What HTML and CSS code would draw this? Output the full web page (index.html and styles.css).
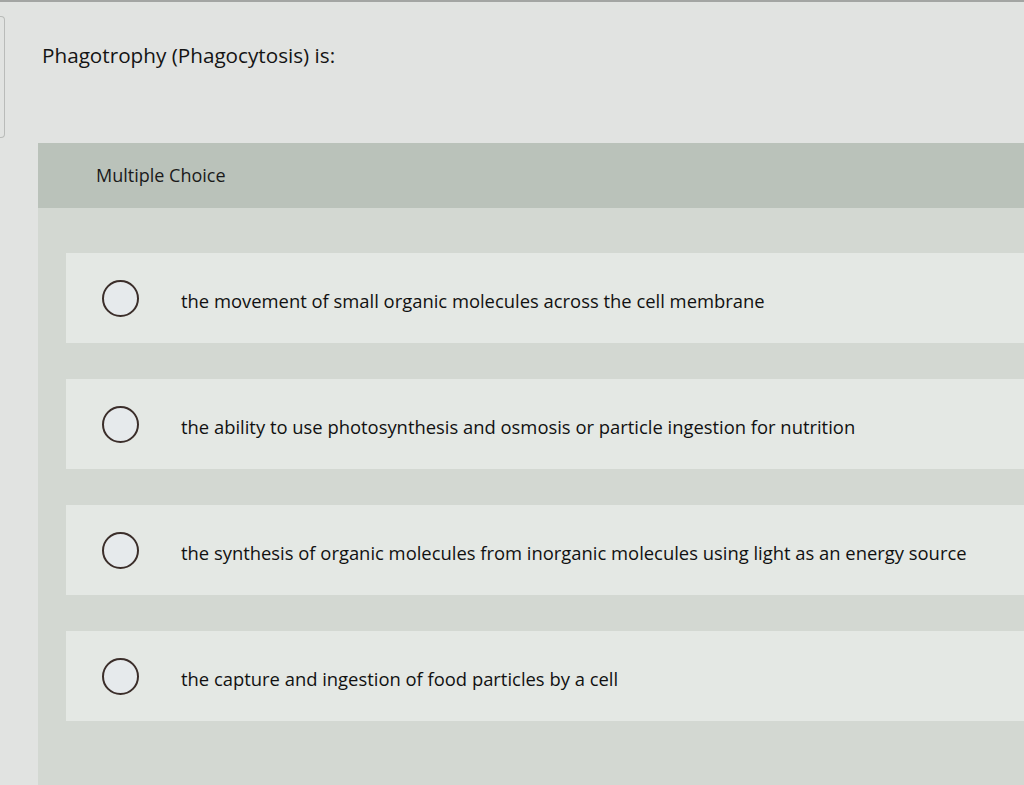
FILE: index.html
```html
<!DOCTYPE html>
<html lang="en">
<head>
<meta charset="utf-8">
<title>Phagotrophy question</title>
<link rel="stylesheet" href="styles.css">
</head>
<body>
<div class="page">
  <div class="stub"></div>
  <main class="content">
    <h1 class="question">Phagotrophy (Phagocytosis) is:</h1>
    <section class="panel">
      <div class="panel-head">Multiple Choice</div>
      <div class="options">
        <label class="option"><span class="radio"></span><span class="option-text">the movement of small organic molecules across the cell membrane</span></label>
        <label class="option"><span class="radio"></span><span class="option-text">the ability to use photosynthesis and osmosis or particle ingestion for nutrition</span></label>
        <label class="option"><span class="radio"></span><span class="option-text">the synthesis of organic molecules from inorganic molecules using light as an energy source</span></label>
        <label class="option"><span class="radio"></span><span class="option-text">the capture and ingestion of food particles by a cell</span></label>
      </div>
    </section>
  </main>
</div>
</body>
</html>
```

FILE: styles.css
```css
html, body {
  margin: 0;
  padding: 0;
}
body {
  background: #e1e3e1;
  border-top: 2px solid #a3a5a3;
  font-family: "Open Sans", "Liberation Sans", sans-serif;
  color: #151515;
  height: 783px;
  overflow: hidden;
}
.page {
  display: flex;
  height: 100%;
}
.stub {
  width: 4px;
  height: 120px;
  margin-top: 14px;
  border: 1px solid #b9bbb9;
  border-left: none;
  border-radius: 0 4px 4px 0;
  flex: none;
}
.content {
  flex: 1;
  margin-left: 33px;
  display: flex;
  flex-direction: column;
}
.question {
  margin: 38px 0 0 4px;
  font-size: 20.7px;
  line-height: 30px;
  font-weight: 500;
  color: #141414;
}
.panel {
  margin-top: 73px;
  flex: 1;
  background: #d3d8d2;
}
.panel-head {
  height: 65px;
  line-height: 64px;
  padding-left: 58px;
  font-size: 18px;
  font-weight: 500;
  background: #bac2ba;
  color: #1a1a1a;
}
.options {
  padding: 45px 0 0 28px;
  display: flex;
  flex-direction: column;
  gap: 36px;
}
.option {
  height: 90px;
  background: #e4e8e4;
  display: flex;
  align-items: center;
}
.radio {
  width: 33px;
  height: 33px;
  border: 2px solid #3b2e2a;
  border-radius: 50%;
  background: #e6eaec;
  margin-left: 36px;
  flex: none;
}
.option-text {
  margin-left: 42px;
  padding-top: 5px;
  font-size: 18.4px;
  font-weight: 500;
  color: #111;
}
```
